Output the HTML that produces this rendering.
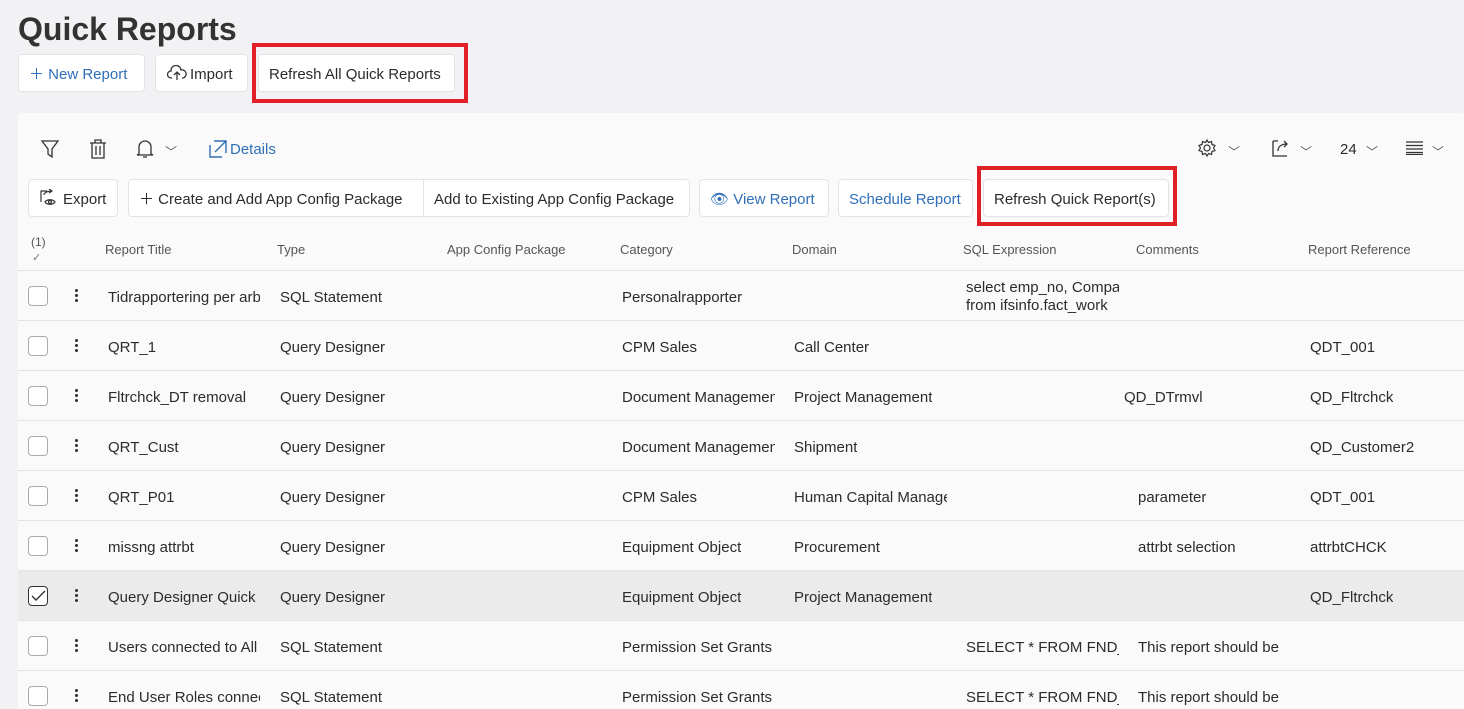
<!DOCTYPE html>
<html><head><meta charset="utf-8"><style>
*{box-sizing:border-box;margin:0;padding:0}
html,body{width:1464px;height:709px;overflow:hidden}
body{background:#f2f1f3;font-family:"Liberation Sans",sans-serif;color:#2b2b2b;position:relative;font-size:15px}
.a{position:absolute;white-space:nowrap}
h1{position:absolute;left:18px;top:11px;font-size:32px;font-weight:bold;color:#333}
.btn{position:absolute;background:#fff;border:1px solid #e3e3e6;border-radius:4px;height:38px;line-height:40px;font-size:15px;padding:0 10px;white-space:nowrap}
.blue{color:#2f6fb8}
.red{position:absolute;border:4px solid #e01f26}
.panel{position:absolute;left:18px;top:113px;width:1446px;height:600px;background:#fafafa;border-radius:4px}
.hdr{position:absolute;top:242px;font-size:13px;color:#555}
.row{position:absolute;left:18px;width:1446px;height:50px;border-top:1px solid #e4e4e4}
.row .c{position:absolute;top:18px;font-size:15px;white-space:nowrap;overflow:hidden}
.cb{position:absolute;left:10px;top:15px;width:20px;height:20px;border:1px solid #aaa;border-radius:4px;background:#fff}
.dots{position:absolute;left:57px;top:17px;width:3px;height:15px;background:radial-gradient(circle,#333 1.4px,transparent 1.6px) 0 0/3px 5px repeat-y}
svg{position:absolute}
</style></head><body>
<h1>Quick Reports</h1>
<div class="btn blue" style="left:18px;top:54px;width:127px">＋ New Report</div>
<div class="btn" style="left:155px;top:54px;width:93px;padding-left:34px">Import</div>
<svg style="left:167px;top:65px" width="20" height="16" viewBox="0 0 20 16" fill="none" stroke="#333" stroke-width="1.3"><path d="M5 13H4a3.5 3.5 0 0 1 0-7 5 5 0 0 1 10-1 4 4 0 0 1 2 8h-1M10 15V7M7 10l3-3 3 3"/></svg>
<div class="btn" style="left:258px;top:54px;width:197px">Refresh All Quick Reports</div>
<div class="red" style="left:252px;top:43px;width:216px;height:60px"></div>
<div class="panel"></div>
<svg style="left:40px;top:139px" width="20" height="20" viewBox="0 0 20 20" fill="none" stroke="#333" stroke-width="1.3"><path d="M2 2h16l-6 8v8l-4-3v-5z"/></svg>
<svg style="left:89px;top:139px" width="18" height="20" viewBox="0 0 18 20" fill="none" stroke="#333" stroke-width="1.3"><path d="M1 4h16M6 4V1h6v3M3 4v15h12V4M7 7v9M11 7v9"/></svg>
<svg style="left:136px;top:139px" width="18" height="20" viewBox="0 0 18 20" fill="none" stroke="#333" stroke-width="1.3"><path d="M3 15V8a6 6 0 0 1 12 0v7l2 1H1zM7 18h4"/></svg>
<div class="a" style="left:165px;top:143px;font-size:12px;color:#555">﹀</div>
<svg style="left:209px;top:140px" width="18" height="18" viewBox="0 0 18 18" fill="none" stroke="#2f6fb8" stroke-width="1.4"><path d="M1 5V17h12M5 1h12v12M17 1L6 12"/></svg>
<div class="a blue" style="left:230px;top:141px">Details</div>
<svg style="left:1198px;top:139px" width="18" height="18" viewBox="0 0 18 18" fill="none" stroke="#333" stroke-width="1.2"><circle cx="9" cy="9" r="3"/><path d="M9 1l1.5 2.5 3-1 .5 3 3 1-1.5 2.5 1.5 2.5-3 1-.5 3-3-1L9 17l-1.5-2.5-3 1-.5-3-3-1L2.5 9 1 6.5l3-1 .5-3 3 1z"/></svg>
<div class="a" style="left:1228px;top:143px;font-size:12px;color:#555">﹀</div>
<svg style="left:1271px;top:139px" width="18" height="18" viewBox="0 0 18 18" fill="none" stroke="#333" stroke-width="1.3"><path d="M2 2v15h14M7 12c0-5 4-7 9-7M13 2l3 3-3 3M2 2h5"/></svg>
<div class="a" style="left:1300px;top:143px;font-size:12px;color:#555">﹀</div>
<div class="a" style="left:1340px;top:141px">24</div>
<div class="a" style="left:1366px;top:143px;font-size:12px;color:#555">﹀</div>
<svg style="left:1406px;top:141px" width="17" height="14" viewBox="0 0 17 14" stroke="#333" stroke-width="1.2"><path d="M0 1h17M0 4.5h17M0 8h17M0 11.5h17M0 13.5h17"/></svg>
<div class="a" style="left:1432px;top:143px;font-size:12px;color:#555">﹀</div>

<div class="btn" style="left:28px;top:179px;width:90px;padding-left:34px">Export</div>
<svg style="left:39px;top:189px" width="22" height="18" viewBox="0 0 22 18" fill="none" stroke="#333" stroke-width="1.2"><path d="M2 13V2h6M5 6c0-2 3-4 8-4M10 0l3 2-3 2"/><path d="M6 13c2-3 8-3 10 0-2 3-8 3-10 0z"/><circle cx="11" cy="13" r="1.5"/></svg>
<div class="btn" style="left:128px;top:179px;width:296px;border-radius:4px 0 0 4px">＋ Create and Add App Config Package</div>
<div class="btn" style="left:423px;top:179px;width:267px;border-radius:0 4px 4px 0">Add to Existing App Config Package</div>
<div class="btn blue" style="left:699px;top:179px;width:130px">👁︎ View Report</div>
<div class="btn blue" style="left:838px;top:179px;width:135px">Schedule Report</div>
<div class="btn" style="left:983px;top:179px;width:186px">Refresh Quick Report(s)</div>
<div class="red" style="left:977px;top:166px;width:200px;height:60px"></div>

<div class="a" style="left:31px;top:235px;font-size:12px;color:#555">(1)</div>
<div class="a" style="left:32px;top:251px;font-size:11px;color:#777">✓</div>
<div class="hdr" style="left:105px">Report Title</div>
<div class="hdr" style="left:277px">Type</div>
<div class="hdr" style="left:447px">App Config Package</div>
<div class="hdr" style="left:620px">Category</div>
<div class="hdr" style="left:792px">Domain</div>
<div class="hdr" style="left:963px">SQL Expression</div>
<div class="hdr" style="left:1136px">Comments</div>
<div class="hdr" style="left:1308px">Report Reference</div>

<div class="row" style="top:270px"><div class="cb"></div><div class="dots"></div>
<div class="c" style="left:90px;width:152px">Tidrapportering per arbete</div><div class="c" style="left:262px">SQL Statement</div><div class="c" style="left:604px">Personalrapporter</div>
<div class="c" style="left:948px;top:8px;width:153px;line-height:18px;height:42px">select emp_no, Company<br>from ifsinfo.fact_work</div></div>
<div class="row" style="top:320px"><div class="cb"></div><div class="dots"></div>
<div class="c" style="left:90px">QRT_1</div><div class="c" style="left:262px">Query Designer</div><div class="c" style="left:604px">CPM Sales</div><div class="c" style="left:776px">Call Center</div><div class="c" style="left:1292px">QDT_001</div></div>
<div class="row" style="top:370px"><div class="cb"></div><div class="dots"></div>
<div class="c" style="left:90px">Fltrchck_DT removal</div><div class="c" style="left:262px">Query Designer</div><div class="c" style="left:604px;width:153px">Document Management</div><div class="c" style="left:776px">Project Management</div><div class="c" style="left:1106px">QD_DTrmvl</div><div class="c" style="left:1292px">QD_Fltrchck</div></div>
<div class="row" style="top:420px"><div class="cb"></div><div class="dots"></div>
<div class="c" style="left:90px">QRT_Cust</div><div class="c" style="left:262px">Query Designer</div><div class="c" style="left:604px;width:153px">Document Management</div><div class="c" style="left:776px">Shipment</div><div class="c" style="left:1292px">QD_Customer2</div></div>
<div class="row" style="top:470px"><div class="cb"></div><div class="dots"></div>
<div class="c" style="left:90px">QRT_P01</div><div class="c" style="left:262px">Query Designer</div><div class="c" style="left:604px">CPM Sales</div><div class="c" style="left:776px;width:153px">Human Capital Management</div><div class="c" style="left:1120px">parameter</div><div class="c" style="left:1292px">QDT_001</div></div>
<div class="row" style="top:520px"><div class="cb"></div><div class="dots"></div>
<div class="c" style="left:90px">missng attrbt</div><div class="c" style="left:262px">Query Designer</div><div class="c" style="left:604px">Equipment Object</div><div class="c" style="left:776px">Procurement</div><div class="c" style="left:1120px">attrbt selection</div><div class="c" style="left:1292px">attrbtCHCK</div></div>
<div class="row" style="top:570px;background:#ebebeb"><div class="cb" style="border-color:#333"></div>
<svg style="left:13px;top:19px" width="15" height="12" viewBox="0 0 15 12" fill="none" stroke="#333" stroke-width="1.4"><path d="M1 6l4 4 9-9"/></svg><div class="dots"></div>
<div class="c" style="left:90px;width:152px">Query Designer Quick Report</div><div class="c" style="left:262px">Query Designer</div><div class="c" style="left:604px">Equipment Object</div><div class="c" style="left:776px">Project Management</div><div class="c" style="left:1292px">QD_Fltrchck</div></div>
<div class="row" style="top:620px"><div class="cb"></div><div class="dots"></div>
<div class="c" style="left:90px;width:152px">Users connected to All</div><div class="c" style="left:262px">SQL Statement</div><div class="c" style="left:604px;width:153px">Permission Set Grants</div><div class="c" style="left:948px;width:153px">SELECT * FROM FND_SOME</div><div class="c" style="left:1120px;width:153px">This report should be</div></div>
<div class="row" style="top:670px"><div class="cb"></div><div class="dots"></div>
<div class="c" style="left:90px;width:152px">End User Roles connected</div><div class="c" style="left:262px">SQL Statement</div><div class="c" style="left:604px;width:153px">Permission Set Grants</div><div class="c" style="left:948px;width:153px">SELECT * FROM FND_SOME</div><div class="c" style="left:1120px;width:153px">This report should be</div></div>
</body></html>
